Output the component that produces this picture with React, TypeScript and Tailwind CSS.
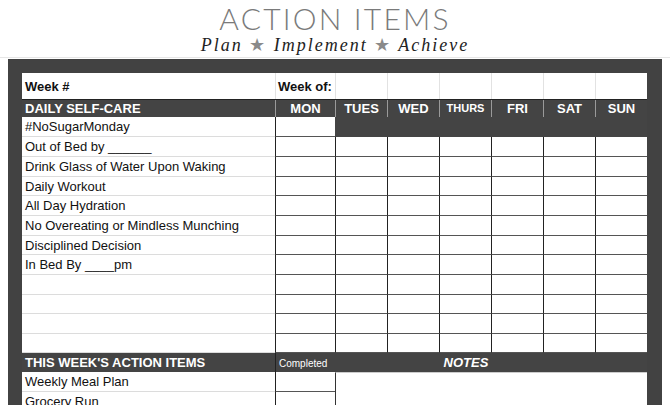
import type { ReactNode } from "react";

const days = ["TUES", "WED", "THURS", "FRI", "SAT", "SUN"];

const dailyRows: { label: string; h: string }[] = [
  { label: "#NoSugarMonday", h: "h-[20px]" },
  { label: "Out of Bed by ______", h: "h-[20px]" },
  { label: "Drink Glass of Water Upon Waking", h: "h-[20px]" },
  { label: "Daily Workout", h: "h-[19px]" },
  { label: "All Day Hydration", h: "h-[20px]" },
  { label: "No Overeating or Mindless Munching", h: "h-[20px]" },
  { label: "Disciplined Decision", h: "h-[19px]" },
  { label: "In Bed By ____pm", h: "h-[20px]" },
  { label: "", h: "h-[20px]" },
  { label: "", h: "h-[19px]" },
  { label: "", h: "h-[20px]" },
  { label: "", h: "h-[19px]" },
];

const actionRows = ["Weekly Meal Plan", "Grocery Run", "", ""];

function Label({ children }: { children?: ReactNode }) {
  return (
    <div className="w-[253px] shrink-0 flex items-center pl-[3px] pt-[1px] border-b border-[#dcdcdc] text-[13px] text-[#111]">
      {children}
    </div>
  );
}

function Box({ w = "w-[52px]" }: { w?: string }) {
  return <div className={`${w} shrink-0 border-l border-b border-l-[#222] border-b-[#555]`} />;
}

export default function App() {
  return (
    <div className="w-[670px] h-[405px] overflow-hidden bg-white font-['Liberation_Sans',Arial,sans-serif]">
      {/* Title */}
      <div className="h-[58px] flex flex-col items-center border-b border-[#e6e6e6]">
        <h1 className="font-['Lato',sans-serif] font-light text-[30px] leading-[36px] tracking-[2.2px] text-[#7a7a7a]">
          ACTION ITEMS
        </h1>
        <p className="font-['Liberation_Serif',serif] italic text-[18px] leading-[19px] tracking-[2px] text-[#222]">
          Plan <span className="text-[#8a8a8a] not-italic text-[18px]">★</span> Implement{" "}
          <span className="text-[#8a8a8a] not-italic text-[18px]">★</span> Achieve
        </p>
      </div>

      {/* Sheet */}
      <div className="mt-[1px] ml-[8px] w-[654px] bg-[#424242] pt-[14px] pl-[14px] pr-[15px]">
        <div className="w-[625px] bg-white">
          {/* Week row */}
          <div className="flex h-[26px] font-bold text-[13px] text-[#111]">
            <div className="w-[253px] flex items-end pl-[3px] pb-[3px]">Week #</div>
            <div className="w-[60px] flex items-end pl-[2px] pb-[3px] border-l border-[#e2e2e2]">
              Week of:
            </div>
            {days.map((d) => (
              <div key={d} className="w-[52px] border-l border-[#e2e2e2]" />
            ))}
          </div>

          {/* Daily header */}
          <div className="flex h-[18px] bg-[#444] text-white font-bold text-[13px] border-t border-[#222]">
            <div className="w-[253px] flex items-center pl-[3px]">DAILY SELF-CARE</div>
            <div className="w-[60px] flex items-center justify-center border-l border-[#9a9a9a]">MON</div>
            {days.map((d) => (
              <div
                key={d}
                className={`w-[52px] flex items-center justify-center border-l border-[#9a9a9a] ${
                  d === "THURS" ? "text-[11px]" : ""
                }`}
              >
                {d}
              </div>
            ))}
          </div>

          {/* Daily rows */}
          {dailyRows.map((r, i) => (
            <div key={i} className={`flex ${r.h}`}>
              <Label>{r.label}</Label>
              <Box w="w-[60px]" />
              {i === 0 ? (
                <div className="w-[312px] bg-[#444]" />
              ) : (
                days.map((d) => <Box key={d} />)
              )}
            </div>
          ))}

          {/* Action items header */}
          <div className="flex h-[19px] bg-[#444] text-white">
            <div className="w-[253px] flex items-center pl-[3px] font-bold text-[13px]">
              THIS WEEK'S ACTION ITEMS
            </div>
            <div className="w-[60px] flex items-end pl-[3px] pb-[1px] text-[10px] border-l border-[#222]">
              Completed
            </div>
            <div className="w-[312px] flex items-center justify-center pr-[50px] font-bold italic text-[13px]">
              NOTES
            </div>
          </div>

          {/* Action rows + notes */}
          <div className="flex">
            <div className="flex flex-col">
              {actionRows.map((a, i) => (
                <div key={i} className="flex h-[20px]">
                  <Label>{a}</Label>
                  <Box w="w-[60px]" />
                </div>
              ))}
            </div>
            <div className="w-[312px] border-l border-t border-l-[#333] border-t-[#ccc]" />
          </div>
        </div>
      </div>
    </div>
  );
}
